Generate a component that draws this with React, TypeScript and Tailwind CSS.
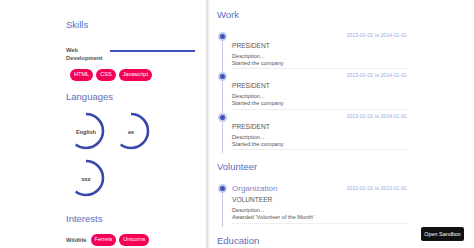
import React from "react";

const font = { fontFamily: '"Liberation Sans", Arial, sans-serif' };

function Pill({ children }: { children: React.ReactNode }) {
  return (
    <span className="flex h-[12px] items-center rounded-full bg-[#f50057] px-[4px] text-[5.6px] leading-none text-white">
      {children}
    </span>
  );
}

function Ring({ label }: { label: string }) {
  const r = 17;
  const c = 2 * Math.PI * r;
  return (
    <div className="relative flex h-[38px] w-[38px] items-center justify-center">
      <svg width="38" height="38" viewBox="0 0 38 38" className="absolute inset-0 -rotate-90">
        <circle
          cx="19"
          cy="19"
          r={r}
          fill="none"
          stroke="#3949ab"
          strokeWidth="2.6"
          strokeDasharray={`${c * 0.6} ${c}`}
        />
      </svg>
      <span className="relative mt-[2px] text-[5.5px] font-bold text-[#444]">{label}</span>
    </div>
  );
}

function Heading({ children, className = "" }: { children: React.ReactNode; className?: string }) {
  return <h2 className={`h-[12px] text-[9.5px] leading-[12px] text-[#5c6bc0] ${className}`}>{children}</h2>;
}

function Entry({
  org,
  date,
  title,
  lines,
}: {
  org?: string;
  date: string;
  title: string;
  lines: string[];
}) {
  return (
    <div className="flex">
      <div className="flex w-[10px] flex-col items-center">
        <div className="flex h-[9px] w-[9px] items-center justify-center rounded-full bg-[#c5cae9]">
          <div className="h-[5px] w-[5px] rounded-full bg-[#3f51b5]" />
        </div>
        <div className="w-px flex-1 bg-[#c5cae9]" />
      </div>
      <div className="ml-[5px] w-[175px] pb-[3px]">
        <div className="border-b border-[#eeeeee] pb-[1.5px]">
          <div className={`flex items-center justify-between ${org ? "h-[10px]" : "h-[8px]"}`}>
            <span className="text-[8px] leading-[10px] text-[#7986cb]">{org ?? ""}</span>
            <span className="text-[5.2px] leading-none text-[#9fa8da]">{date}</span>
          </div>
          <div className="mt-[1px] h-[9px] text-[6.6px] leading-[9px] text-[#555]">{title}</div>
          <div className="mt-[3px] text-[5.6px] leading-[7px] text-[#555]">
            {lines.map((l) => (
              <div key={l}>{l}</div>
            ))}
          </div>
        </div>
      </div>
    </div>
  );
}

export default function App() {
  return (
    <div className="relative flex h-[248px] w-[474px] overflow-hidden bg-white" style={font}>
      <div className="h-full w-[208px] shrink-0 border-r-2 border-[#e2e2e2] pl-[66px] pr-[11px] pt-[19px] shadow-[1px_0_2px_rgba(0,0,0,0.08)]">
        <Heading>Skills</Heading>
        <div className="mt-[15px] flex items-start">
          <div className="w-[44px] text-[5.8px] font-bold leading-[8px] text-[#555]">
            Web
            <br />
            Development
          </div>
          <div className="mt-[4px] h-[1.5px] flex-1 bg-[#3f51b5]" />
        </div>
        <div className="mt-[7px] flex gap-[3px] pl-[4px]">
          <Pill>HTML</Pill>
          <Pill>CSS</Pill>
          <Pill>Javascript</Pill>
        </div>
        <Heading className="mt-[10px]">Languages</Heading>
        <div className="ml-[1px] mt-[9px] grid w-[83px] grid-cols-[38px_38px] gap-x-[7px] gap-y-[9px]">
          <Ring label="English" />
          <Ring label="ee" />
          <Ring label="xxx" />
        </div>
        <Heading className="mt-[16px]">Interests</Heading>
        <div className="mt-[9px] flex items-center gap-[3px]">
          <span className="mr-[1px] text-[5.8px] font-bold text-[#555]">Wildlife</span>
          <Pill>Ferrets</Pill>
          <Pill>Unicorns</Pill>
        </div>
      </div>

      <div className="flex-1 pl-[9px] pt-[9px]">
        <Heading>Work</Heading>
        <div className="mt-[10.5px]">
          <Entry date="2013-01-01 to 2014-01-01" title="PRESIDENT" lines={["Description...", "Started the company"]} />
          <Entry date="2013-01-01 to 2014-01-01" title="PRESIDENT" lines={["Description...", "Started the company"]} />
          <Entry date="2013-01-01 to 2014-01-01" title="PRESIDENT" lines={["Description...", "Started the company"]} />
        </div>
        <Heading className="mt-[8px]">Volunteer</Heading>
        <div className="mt-[11px]">
          <Entry
            org="Organization"
            date="2012-01-01 to 2013-01-01"
            title="VOLUNTEER"
            lines={["Description...", "Awarded 'Volunteer of the Month'"]}
          />
        </div>
        <Heading className="mt-[8px]">Education</Heading>
      </div>

      <button className="absolute left-[421px] top-[227px] flex h-[14px] w-[43px] items-center justify-center rounded-[2px] bg-[#111] text-[5.5px] text-white">
        Open Sandbox
      </button>
    </div>
  );
}
